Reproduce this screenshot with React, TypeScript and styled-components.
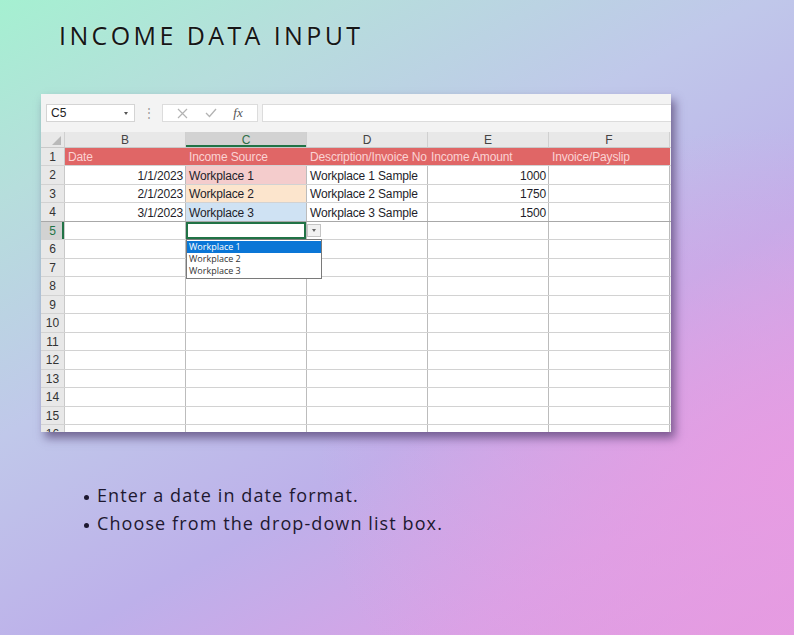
import React from "react";
import styled, { createGlobalStyle, css } from "styled-components";

const GlobalStyle = createGlobalStyle`
  html, body { margin: 0; padding: 0; }
  body { font-family: "Open Sans", "Liberation Sans", sans-serif; }
`;

const Page = styled.div`
  width: 794px;
  height: 635px;
  overflow: hidden;
  background:
    radial-gradient(ellipse 60% 55% at 100% 75%, rgba(232, 156, 226, 0.9), rgba(232, 156, 226, 0) 100%),
    linear-gradient(150deg, #a5f0d1 0%, #b6dedc 18%, #c0c8ea 40%, #bdb0ea 62%, #d8a2e6 82%, #e49ae0 100%);
  display: flex;
  flex-direction: column;
`;

const Title = styled.h1`
  margin: 0 0 0 59px;
  padding-top: 20px;
  font-size: 25px;
  line-height: 30px;
  font-weight: 400;
  letter-spacing: 3.4px;
  color: #161616;
  text-shadow: 0 0 3px rgba(255, 255, 255, 0.35);
`;

const Window = styled.div`
  position: relative;
  margin: 44px 0 0 41px;
  width: 630px;
  height: 338px;
  background: #f3f3f3;
  box-shadow: 4px 6px 9px rgba(70, 50, 100, 0.65);
  overflow: hidden;
  font-family: "Liberation Sans", Arial, sans-serif;
`;

const Toolbar = styled.div`
  height: 38px;
  display: flex;
  align-items: flex-start;
  padding-top: 10px;
  box-sizing: border-box;
`;

const NameBox = styled.div`
  margin-left: 5px;
  width: 89px;
  height: 18px;
  background: #fff;
  border: 1px solid #d4d4d4;
  box-sizing: border-box;
  display: flex;
  align-items: center;
  justify-content: space-between;
  padding: 0 6px 0 4px;
  font-size: 12px;
  color: #222;
`;

const Caret = styled.span`
  width: 0;
  height: 0;
  border-left: 2.5px solid transparent;
  border-right: 2.5px solid transparent;
  border-top: 3px solid #555;
`;

const Dots = styled.div`
  width: 27px;
  height: 18px;
  display: flex;
  align-items: center;
  justify-content: center;
  color: #9a9a9a;
  font-size: 12px;
`;

const FormulaButtons = styled.div`
  width: 96px;
  height: 18px;
  background: #fff;
  border: 1px solid #dcdcdc;
  box-sizing: border-box;
  display: flex;
  align-items: center;
  justify-content: space-around;
  padding: 0 6px;
`;

const Fx = styled.span`
  font-family: "Liberation Serif", "Times New Roman", serif;
  font-style: italic;
  font-size: 13px;
  color: #555;
`;

const FormulaInput = styled.div`
  margin-left: 4px;
  flex: 1;
  height: 18px;
  background: #fff;
  border: 1px solid #dcdcdc;
  border-right: none;
  box-sizing: border-box;
`;

const Grid = styled.div`
  position: relative;
  background: #fff;
`;

const Row = styled.div<{ $h: number; $strong?: boolean }>`
  display: grid;
  grid-template-columns: 24px repeat(5, 121px) 1fr;
  height: ${(p) => p.$h}px;
  border-bottom: 1px solid ${(p) => (p.$strong ? "#a8a8a8" : "#d2d2d2")};
  box-sizing: border-box;
`;

const HeadRow = styled(Row)`
  background: #e8e8e8;
  border-bottom: 1px solid #c9c9c9;
`;

const ColHead = styled.div<{ $active?: boolean }>`
  display: flex;
  align-items: center;
  justify-content: center;
  font-size: 12px;
  color: #444;
  border-right: 1px solid #d0d0d0;
  ${(p) =>
    p.$active &&
    css`
      background: #d2d2d2;
      color: #2f6f47;
      box-shadow: inset 0 -2px 0 #217346;
    `}
`;

const Corner = styled.div`
  position: relative;
  border-right: 1px solid #d0d0d0;
  &::after {
    content: "";
    position: absolute;
    right: 3px;
    bottom: 2px;
    width: 0;
    height: 0;
    border-left: 9px solid transparent;
    border-bottom: 9px solid #b9b9b9;
  }
`;

const RowHead = styled.div<{ $active?: boolean }>`
  background: #e8e8e8;
  display: flex;
  align-items: center;
  justify-content: center;
  font-size: 12px;
  color: #333;
  border-right: 1px solid #c9c9c9;
  ${(p) =>
    p.$active &&
    css`
      background: #d2d2d2;
      color: #217346;
      box-shadow: inset -2px 0 0 #217346;
    `}
`;

const Cell = styled.div<{ $bg?: string; $right?: boolean; $head?: boolean; $sel?: boolean }>`
  background: ${(p) => p.$bg || "transparent"};
  border-right: 1px solid #bcbcbc;
  display: flex;
  align-items: flex-end;
  justify-content: ${(p) => (p.$right ? "flex-end" : "flex-start")};
  padding: 0 2px 1px 3px;
  font-size: 12px;
  letter-spacing: -0.15px;
  white-space: nowrap;
  color: #1e1e2a;
  min-width: 0;
  ${(p) =>
    p.$head &&
    css`
      background: #e06666;
      color: #fbd3d3;
      border-right-color: #e06666;
      overflow: visible;
    `}
  ${(p) =>
    p.$sel &&
    css`
      box-shadow: inset 0 0 0 2px #217346;
    `}
`;

const Strip = styled.div`
  background: #f0f0f0;
`;

const DropArrow = styled.div`
  position: absolute;
  left: 266px;
  top: 92px;
  width: 14px;
  height: 13px;
  background: #f1f1f1;
  border: 1px solid #c4c4c4;
  box-sizing: border-box;
  display: flex;
  align-items: center;
  justify-content: center;
  &::after {
    content: "";
    border-left: 2.5px solid transparent;
    border-right: 2.5px solid transparent;
    border-top: 3px solid #666;
  }
`;

const DropList = styled.div`
  position: absolute;
  left: 145px;
  top: 107px;
  width: 136px;
  background: #fff;
  border: 1px solid #7a7a7a;
  box-sizing: border-box;
  padding: 1px 0;
  font-family: "Open Sans", "Liberation Sans", sans-serif;
`;

const DropItem = styled.div<{ $sel?: boolean }>`
  height: 12px;
  line-height: 12px;
  padding-left: 2px;
  font-size: 9px;
  color: ${(p) => (p.$sel ? "#fff" : "#333")};
  background: ${(p) => (p.$sel ? "#0a76d6" : "transparent")};
`;

const Notes = styled.ul`
  margin: 49px 0 0 0;
  padding: 0 0 0 97px;
  list-style: none;
  font-size: 18px;
  line-height: 28px;
  letter-spacing: 1.1px;
  color: #1d1830;
`;

const Note = styled.li`
  position: relative;
  &::before {
    content: "";
    position: absolute;
    left: -13px;
    top: 14px;
    width: 5px;
    height: 5px;
    border-radius: 50%;
    background: #1d1830;
  }
`;

const XIcon = () => (
  <svg width="11" height="11" viewBox="0 0 11 11">
    <path d="M1 1 L10 10 M10 1 L1 10" stroke="#b3b3b3" strokeWidth="1.2" fill="none" />
  </svg>
);

const CheckIcon = () => (
  <svg width="12" height="10" viewBox="0 0 12 10">
    <path d="M1 5 L4.5 8.5 L11 1" stroke="#b3b3b3" strokeWidth="1.3" fill="none" />
  </svg>
);

type DataRow = { date?: string; src?: string; srcBg?: string; desc?: string; amt?: string };

const data: DataRow[] = [
  { date: "1/1/2023", src: "Workplace 1", srcBg: "#f4cccc", desc: "Workplace 1 Sample", amt: "1000" },
  { date: "2/1/2023", src: "Workplace 2", srcBg: "#fce5cd", desc: "Workplace 2 Sample", amt: "1750" },
  { date: "3/1/2023", src: "Workplace 3", srcBg: "#cfe2f3", desc: "Workplace 3 Sample", amt: "1500" },
];

const heights = [18, 19, 18, 19, 18, 19, 18, 19, 18, 19, 18, 19, 18, 19, 18];

const App = () => {
  return (
    <Page>
      <GlobalStyle />
      <Title>INCOME DATA INPUT</Title>
      <Window>
        <Toolbar>
          <NameBox>
            C5
            <Caret />
          </NameBox>
          <Dots>⋮</Dots>
          <FormulaButtons>
            <XIcon />
            <CheckIcon />
            <Fx>fx</Fx>
          </FormulaButtons>
          <FormulaInput />
        </Toolbar>
        <Grid>
          <HeadRow $h={16}>
            <Corner />
            <ColHead>B</ColHead>
            <ColHead $active>C</ColHead>
            <ColHead>D</ColHead>
            <ColHead>E</ColHead>
            <ColHead>F</ColHead>
            <Strip />
          </HeadRow>
          {heights.map((h, i) => {
            const n = i + 1;
            if (n === 1) {
              return (
                <Row key={n} $h={h}>
                  <RowHead>1</RowHead>
                  <Cell $head>Date</Cell>
                  <Cell $head>Income Source</Cell>
                  <Cell $head>Description/Invoice No</Cell>
                  <Cell $head>Income Amount</Cell>
                  <Cell $head>Invoice/Payslip</Cell>
                  <Strip />
                </Row>
              );
            }
            const d = data[n - 2];
            return (
              <Row key={n} $h={h} $strong={n === 4}>
                <RowHead $active={n === 5}>{n}</RowHead>
                <Cell $right>{d?.date}</Cell>
                <Cell $bg={d?.srcBg} $sel={n === 5}>
                  {d?.src}
                </Cell>
                <Cell>{d?.desc}</Cell>
                <Cell $right>{d?.amt}</Cell>
                <Cell />
                <Strip />
              </Row>
            );
          })}
          <Row $h={18}>
            <RowHead>16</RowHead>
            <Cell />
            <Cell />
            <Cell />
            <Cell />
            <Cell />
            <Strip />
          </Row>
          <DropArrow />
          <DropList>
            <DropItem $sel>Workplace 1</DropItem>
            <DropItem>Workplace 2</DropItem>
            <DropItem>Workplace 3</DropItem>
          </DropList>
        </Grid>
      </Window>
      <Notes>
        <Note>Enter a date in date format.</Note>
        <Note>Choose from the drop-down list box.</Note>
      </Notes>
    </Page>
  );
};

export default App;
